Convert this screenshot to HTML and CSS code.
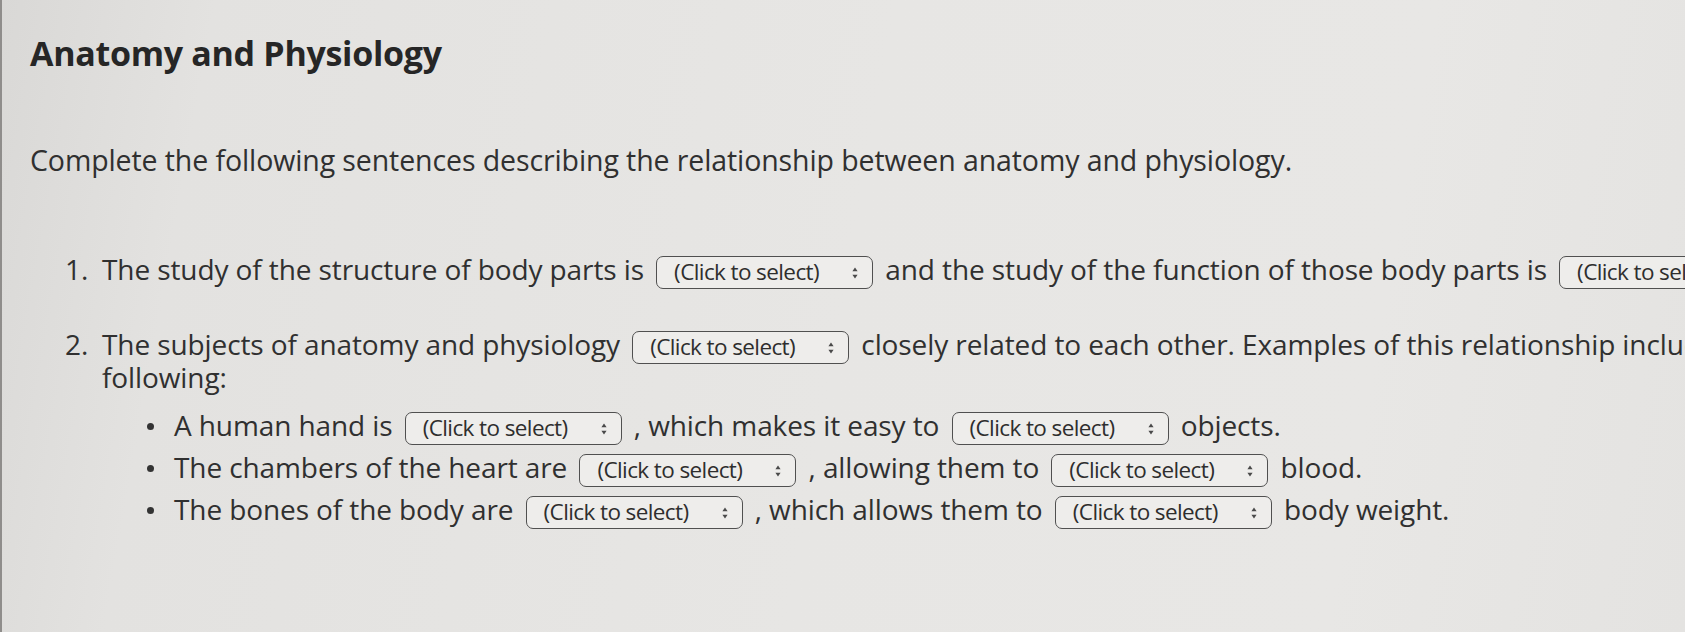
FILE: index.html
```html
<!DOCTYPE html>
<html lang="en">
<head>
<meta charset="utf-8">
<title>Anatomy and Physiology</title>
<link rel="stylesheet" href="styles.css">
</head>
<body>
<main class="page">
  <h1 class="title">Anatomy and Physiology</h1>
  <p class="intro">Complete the following sentences describing the relationship between anatomy and physiology.</p>
  <ol class="questions">
    <li class="q q1"><span class="num">1.</span>The study of the structure of body parts is <span class="dd">(Click to select)<svg class="arr" viewBox="0 0 8 14" width="8" height="14"><path d="M4 1.5 L6.6 5.3 L1.4 5.3 Z M1.4 8.7 L6.6 8.7 L4 12.5 Z"/></svg></span> and the study of the function of those body parts is <span class="dd">(Click to select)<svg class="arr" viewBox="0 0 8 14" width="8" height="14"><path d="M4 1.5 L6.6 5.3 L1.4 5.3 Z M1.4 8.7 L6.6 8.7 L4 12.5 Z"/></svg></span></li>
    <li class="q q2"><span class="num">2.</span>The subjects of anatomy and physiology <span class="dd">(Click to select)<svg class="arr" viewBox="0 0 8 14" width="8" height="14"><path d="M4 1.5 L6.6 5.3 L1.4 5.3 Z M1.4 8.7 L6.6 8.7 L4 12.5 Z"/></svg></span> closely related to each other. Examples of this relationship include the<br>following:
      <ul class="examples">
        <li>A human hand is <span class="dd">(Click to select)<svg class="arr" viewBox="0 0 8 14" width="8" height="14"><path d="M4 1.5 L6.6 5.3 L1.4 5.3 Z M1.4 8.7 L6.6 8.7 L4 12.5 Z"/></svg></span> , which makes it easy to <span class="dd">(Click to select)<svg class="arr" viewBox="0 0 8 14" width="8" height="14"><path d="M4 1.5 L6.6 5.3 L1.4 5.3 Z M1.4 8.7 L6.6 8.7 L4 12.5 Z"/></svg></span> objects.</li>
        <li>The chambers of the heart are <span class="dd">(Click to select)<svg class="arr" viewBox="0 0 8 14" width="8" height="14"><path d="M4 1.5 L6.6 5.3 L1.4 5.3 Z M1.4 8.7 L6.6 8.7 L4 12.5 Z"/></svg></span> , allowing them to <span class="dd">(Click to select)<svg class="arr" viewBox="0 0 8 14" width="8" height="14"><path d="M4 1.5 L6.6 5.3 L1.4 5.3 Z M1.4 8.7 L6.6 8.7 L4 12.5 Z"/></svg></span> blood.</li>
        <li>The bones of the body are <span class="dd">(Click to select)<svg class="arr" viewBox="0 0 8 14" width="8" height="14"><path d="M4 1.5 L6.6 5.3 L1.4 5.3 Z M1.4 8.7 L6.6 8.7 L4 12.5 Z"/></svg></span> , which allows them to <span class="dd">(Click to select)<svg class="arr" viewBox="0 0 8 14" width="8" height="14"><path d="M4 1.5 L6.6 5.3 L1.4 5.3 Z M1.4 8.7 L6.6 8.7 L4 12.5 Z"/></svg></span> body weight.</li>
      </ul>
    </li>
  </ol>
</main>
</body>
</html>
```

FILE: styles.css
```css
html, body {
  margin: 0;
  padding: 0;
  width: 1685px;
  height: 632px;
  overflow: hidden;
}

body {
  background: linear-gradient(100deg, #d9d8d6 0%, #e3e2e0 12%, #e7e6e4 50%, #e8e7e5 80%, #e4e3e1 100%);
  border-left: 2px solid #8f8d8b;
  box-sizing: border-box;
  color: #2c2c2c;
  font-family: "Open Sans", "Lato", "Liberation Sans", sans-serif;
}

.page {
  padding: 0 0 0 28px;
  width: 2000px;
}

.title {
  margin: 32px 0 0;
  font-size: 34px;
  line-height: 42px;
  font-weight: 700;
  color: #262626;
  letter-spacing: -0.3px;
}

.intro {
  margin: 69px 0 0;
  font-size: 28.5px;
  line-height: 34px;
  color: #303030;
  letter-spacing: -0.1px;
}

.questions {
  list-style: none;
  margin: 72px 0 0;
  padding: 0 0 0 72px;
  font-size: 28px;
  color: #303030;
  letter-spacing: -0.1px;
}

.q {
  line-height: 40px;
}

.q1 {
  white-space: nowrap;
}

.q2 {
  margin-top: 39px;
  line-height: 33px;
}

.num {
  display: inline-block;
  width: 37px;
  margin-left: -37px;
}

.dd {
  display: inline-flex;
  align-items: center;
  justify-content: space-between;
  box-sizing: border-box;
  width: 217px;
  height: 33px;
  margin: -4px 5px -4px 5px;
  padding: 0 13px 0 17px;
  vertical-align: middle;
  border: 1.7px solid #505050;
  border-radius: 7px;
  background: #eeedeb;
  font-size: 22.5px;
  letter-spacing: -0.6px;
  line-height: 1;
  color: #2e2e2e;
  white-space: nowrap;
}

.arr {
  fill: #4a4a4a;
  flex: none;
}

.examples {
  list-style: none;
  margin: 10px 0 0;
  padding: 0 0 0 50px;
}

.examples li {
  position: relative;
  line-height: 42px;
  padding-left: 22px;
  white-space: nowrap;
}

.examples li::before {
  content: "";
  position: absolute;
  left: -5px;
  top: 19px;
  width: 7px;
  height: 7px;
  border-radius: 50%;
  background: #333;
}
```
